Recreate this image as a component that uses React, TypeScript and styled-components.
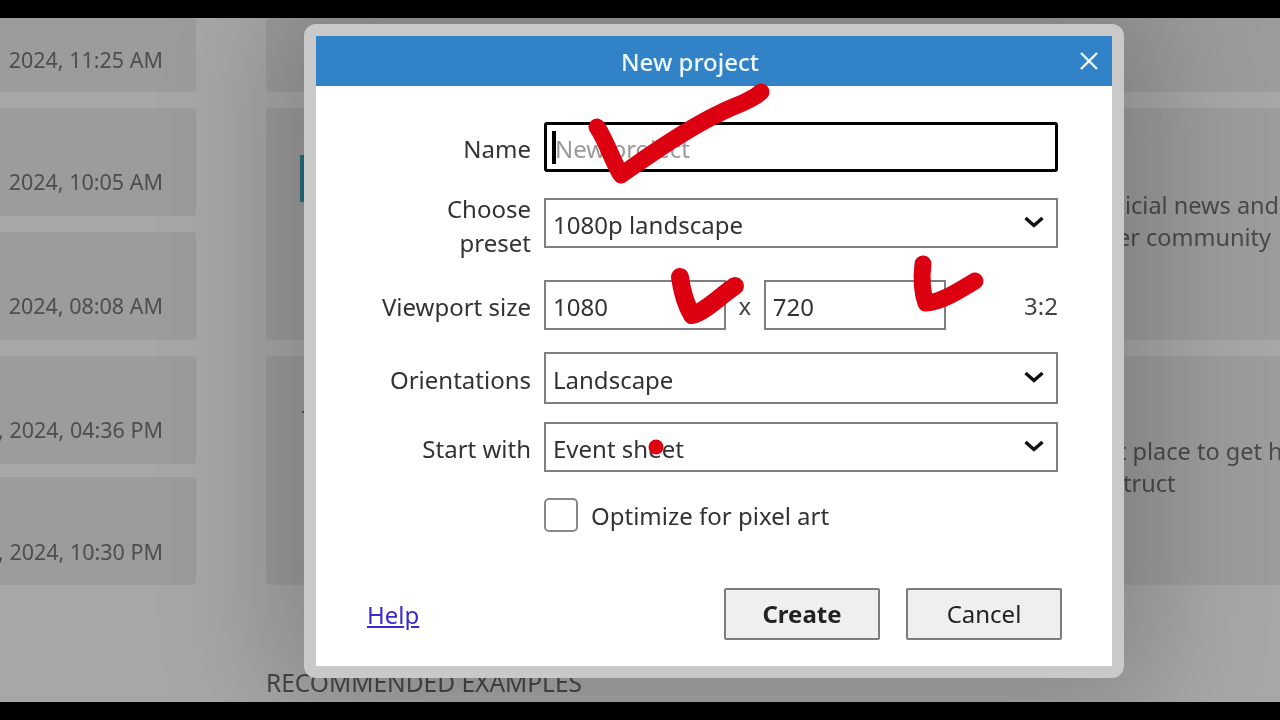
import React, { FC } from 'react'
import styled, { createGlobalStyle } from 'styled-components'

const GlobalStyle = createGlobalStyle`
  html, body {
    margin: 0;
    background: #000;
  }
  body {
    font-family: "Noto Sans", "Open Sans", sans-serif;
  }
`

const Screen = styled.div`
  position: relative;
  width: 1280px;
  height: 720px;
  padding: 18px 0;
  box-sizing: border-box;
  overflow: hidden;
  background: #000;
  filter: blur(0.4px);
`

const Stage = styled.div`
  position: relative;
  display: flex;
  gap: 70px;
  height: 684px;
  overflow: hidden;
  background: #a7a7a7;
`

const LeftColumn = styled.div`
  display: flex;
  flex-direction: column;
  flex: 0 0 196px;
  min-width: 0;
  gap: 16px;
`

const SessionCard = styled.div<{ $height: number; $bottom?: number; $pull?: number }>`
  display: flex;
  justify-content: flex-end;
  align-items: flex-end;
  height: ${p => p.$height}px;
  margin-top: ${p => -(p.$pull ?? 0)}px;
  padding: 0 33px ${p => p.$bottom ?? 18}px 0;
  box-sizing: border-box;
  border-radius: 0 4px 4px 0;
  overflow: hidden;
  background: #9c9c9c;
  color: #4e4e4e;
  font-size: 21.5px;
  line-height: 32px;
  white-space: nowrap;
`

const MainColumn = styled.div`
  display: flex;
  flex-direction: column;
  flex: 1;
  min-width: 0;
  gap: 16px;
`

const NewsCard = styled.div<{ $height: number }>`
  display: flex;
  flex: 0 0 ${p => p.$height}px;
  border-radius: 4px 0 0 4px;
  overflow: hidden;
  background: #9c9c9c;
`

const Thumb = styled.div`
  flex: 0 0 60px;
  height: 47px;
  margin: 47px 0 0 34px;
  background: #26707f;
`

const Mark = styled.div`
  flex: 0 0 3px;
  height: 2px;
  margin: 55px 0 0 36px;
  background: #555;
`

const NewsText = styled.div<{ $top: number }>`
  display: flex;
  flex-direction: column;
  margin-top: ${p => p.$top}px;
  color: #4a4a4a;
  font-size: 23.5px;
  line-height: 32px;
  white-space: nowrap;
`

const NewsLine = styled.div<{ $left: number }>`
  padding-left: ${p => p.$left}px;
`

const SectionTitle = styled.div`
  margin-top: 67px;
  color: #464646;
  font-size: 24.5px;
  line-height: 30px;
  white-space: nowrap;
`

const Dialog = styled.div`
  position: absolute;
  top: 6px;
  left: 304px;
  width: 820px;
  height: 654px;
  box-sizing: border-box;
  border: 12px solid #c9c9c9;
  border-radius: 12px;
  background: #fff;
  background-clip: padding-box;
  box-shadow: 0 0 120px 30px rgba(0, 0, 0, 0.2);
`

const TitleBar = styled.div`
  display: flex;
  align-items: center;
  justify-content: center;
  height: 50px;
  padding-right: 48px;
  box-sizing: border-box;
  background: #3182c6;
  color: #eef7ff;
  font-size: 24px;
  font-weight: 500;
`

const CloseButton = styled.svg`
  position: absolute;
  top: 16px;
  right: 14px;
  width: 18px;
  height: 18px;
`

const Body = styled.div`
  display: flex;
  flex-direction: column;
  padding: 36px 54px 0 0;
`

const Row = styled.div<{ $top?: number }>`
  display: flex;
  align-items: center;
  gap: 13px;
  margin-top: ${p => p.$top ?? 0}px;
`

const Label = styled.div<{ $twoLines?: boolean }>`
  flex: 0 0 215px;
  margin: ${p => (p.$twoLines ? '-9px 0 -12px' : '0')};
  padding-top: 3px;
  text-align: right;
  color: #333;
  font-size: 24px;
  line-height: 34px;
`

const Field = styled.div<{ $height?: number; $width?: number; $focused?: boolean }>`
  display: flex;
  align-items: center;
  justify-content: space-between;
  flex: ${p => (p.$width ? `0 0 ${p.$width}px` : 1)};
  height: ${p => p.$height ?? 50}px;
  padding: 2px 12px 0 7px;
  box-sizing: border-box;
  border: ${p => (p.$focused ? '3px solid #000' : '2px solid #7f7f7f')};
  border-radius: ${p => (p.$focused ? '3px' : '0')};
  background: #fff;
  color: #333;
  font-size: 24px;
`

const Caret = styled.span`
  flex: 0 0 4px;
  height: 33px;
  margin: -2px 0 0 -2px;
  background: #000;
`

const Placeholder = styled.span`
  flex: 1;
  margin-left: -1px;
  color: #9a9a9a;
`

const Chevron = styled.svg`
  flex: 0 0 20px;
  height: 12px;
  margin-top: -4px;
`

const Times = styled.span`
  flex: 0 0 12px;
  margin: 0 -0.5px;
  color: #444;
  font-size: 24px;
`

const Ratio = styled.span`
  flex: 1;
  text-align: right;
  color: #444;
  font-size: 24px;
`

const CheckboxRow = styled.div`
  display: flex;
  align-items: center;
  gap: 13px;
  margin: 26px 0 0 228px;
  color: #333;
  font-size: 24px;
`

const Checkbox = styled.span`
  width: 34px;
  height: 34px;
  box-sizing: border-box;
  border: 2px solid #8a8a8a;
  border-radius: 5px;
`

const Footer = styled.div`
  display: flex;
  align-items: center;
  margin-top: 56px;
  padding: 0 50px 0 51px;
`

const HelpLink = styled.a`
  flex: 1;
  color: #3a2bd0;
  font-size: 24px;
  text-decoration: underline;
`

const Button = styled.button<{ $primary?: boolean }>`
  width: 156px;
  height: 52px;
  margin-left: ${p => (p.$primary ? 0 : 26)}px;
  padding: 0 0 2px;
  border: 2px solid #7c7c7c;
  border-radius: 2px;
  background: #efefef;
  color: #222;
  font-family: inherit;
  font-size: 24px;
  font-weight: ${p => (p.$primary ? 700 : 400)};
`

const Scribbles = styled.svg`
  position: absolute;
  top: 0;
  left: 0;
  width: 1280px;
  height: 720px;
  pointer-events: none;
`

const DownIcon: FC = () => (
  <Chevron viewBox="0 0 20 12">
    <path d="M1.5 2 L10 9.5 L18.5 2" fill="none" stroke="#111" strokeWidth="3.4" />
  </Chevron>
)

export default function App() {
  return (
    <>
      <GlobalStyle />
      <Screen>
        <Stage>
          <LeftColumn>
            <SessionCard $height={74} $bottom={16}>2024, 11:25 AM</SessionCard>
            <SessionCard $height={108}>2024, 10:05 AM</SessionCard>
            <SessionCard $height={108}>2024, 08:08 AM</SessionCard>
            <SessionCard $height={108}>, 2024, 04:36 PM</SessionCard>
            <SessionCard $height={108} $pull={3} $bottom={17}>, 2024, 10:30 PM</SessionCard>
          </LeftColumn>
          <MainColumn>
            <NewsCard $height={74} />
            <NewsCard $height={232}>
              <Thumb />
              <NewsText $top={81}>
                <NewsLine $left={765}>icial news and</NewsLine>
                <NewsLine $left={757}>er community</NewsLine>
              </NewsText>
            </NewsCard>
            <NewsCard $height={229}>
              <Mark />
              <NewsText $top={79}>
                <NewsLine $left={813}>t place to get help</NewsLine>
                <NewsLine $left={818}>truct</NewsLine>
              </NewsText>
            </NewsCard>
            <SectionTitle>RECOMMENDED EXAMPLES</SectionTitle>
          </MainColumn>
          <Dialog>
            <TitleBar>New project</TitleBar>
            <CloseButton viewBox="0 0 18 18">
              <path d="M1 1 L17 17 M17 1 L1 17" stroke="#f2f8ff" strokeWidth="2.4" fill="none" />
            </CloseButton>
            <Body>
              <Row>
                <Label>Name</Label>
                <Field $focused>
                  <Caret />
                  <Placeholder>New project</Placeholder>
                </Field>
              </Row>
              <Row $top={26}>
                <Label $twoLines>Choose<br />preset</Label>
                <Field>
                  1080p landscape
                  <DownIcon />
                </Field>
              </Row>
              <Row $top={32}>
                <Label>Viewport size</Label>
                <Field $width={182}>1080</Field>
                <Times>x</Times>
                <Field $width={182}>720</Field>
                <Ratio>3:2</Ratio>
              </Row>
              <Row $top={22}>
                <Label>Orientations</Label>
                <Field $height={52}>
                  Landscape
                  <DownIcon />
                </Field>
              </Row>
              <Row $top={18}>
                <Label>Start with</Label>
                <Field>
                  Event sheet
                  <DownIcon />
                </Field>
              </Row>
              <CheckboxRow>
                <Checkbox />
                Optimize for pixel art
              </CheckboxRow>
            </Body>
            <Footer>
              <HelpLink>Help</HelpLink>
              <Button $primary>Create</Button>
              <Button>Cancel</Button>
            </Footer>
          </Dialog>
        </Stage>
        <Scribbles viewBox="0 0 1280 720">
          <g fill="none" stroke="#dc0010" strokeLinecap="round" strokeLinejoin="round">
            <path d="M597 127 C606 140 612 160 621 175 C640 162 680 132 720 113 C735 105 750 102 761 92" strokeWidth="17" />
            <path d="M680 277 C682 292 686 305 692 315 C705 312 720 296 735 286" strokeWidth="18" />
            <path d="M923 264 C921 280 922 292 926 303 C942 302 960 290 975 281" strokeWidth="17" />
          </g>
          <circle cx="656" cy="447" r="7.5" fill="#dc0010" />
        </Scribbles>
      </Screen>
    </>
  )
}
